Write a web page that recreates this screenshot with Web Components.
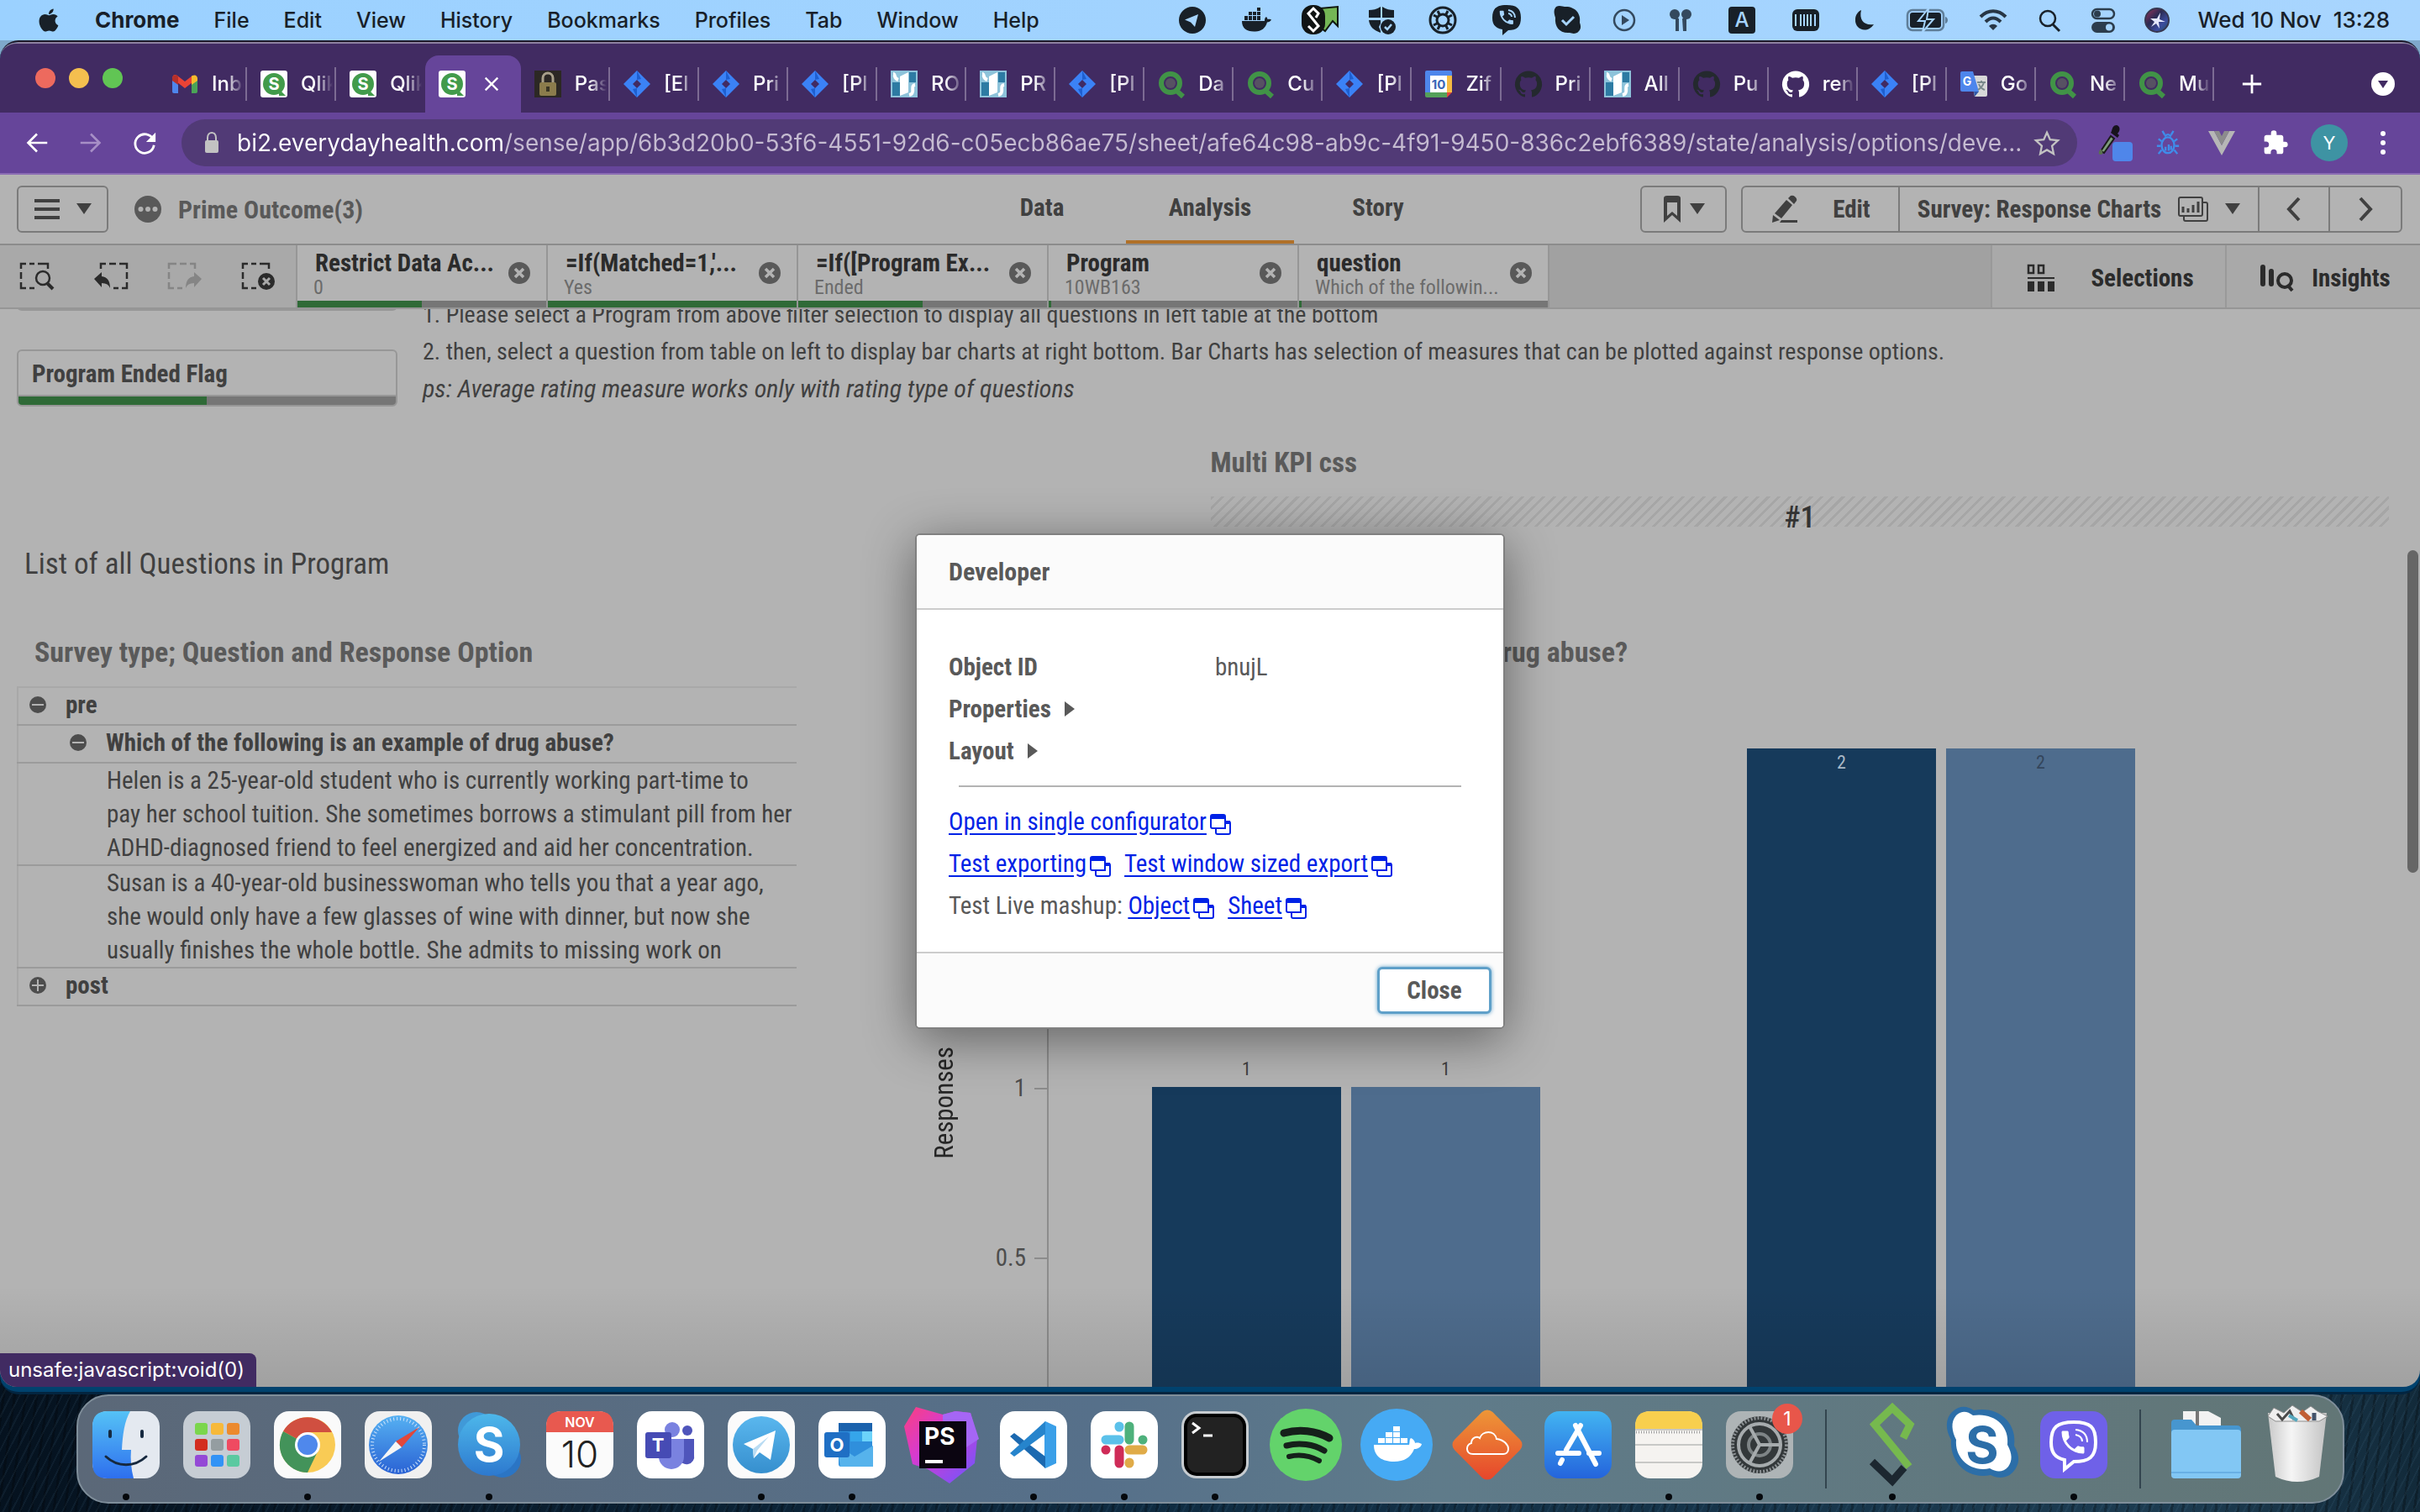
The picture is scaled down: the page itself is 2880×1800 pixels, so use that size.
<!DOCTYPE html>
<html lang="en">
<head>
<meta charset="utf-8">
<title>Survey: Response Charts</title>
<style>
    html, body {
        margin: 0;
        height: 100%;
        overflow: hidden;
    }

    body {
        font-family: "Roboto Condensed", Roboto, "Liberation Sans", sans-serif;
        font-size: 29px;
        color: #404040;
    }
</style>
</head>
<body>
<mac-desktop>
    <menu-bar slot="top"></menu-bar>
    <browser-window>
        <tab-strip slot="chrome"></tab-strip>
        <address-bar slot="chrome"></address-bar>
        <sheet-header></sheet-header>
        <selection-bar></selection-bar>
        <sheet-page></sheet-page>
        <developer-dialog slot="overlay"></developer-dialog>
        <span slot="status">unsafe:javascript:void(0)</span>
    </browser-window>
    <dock-bar slot="bottom"></dock-bar>
</mac-desktop>

<script>
const UI_FONT = `Inter, "Liberation Sans", sans-serif`;

const PHONE = "M6.62 10.79a15.1 15.1 0 0 0 6.59 6.59l2.2-2.2a1 1 0 0 1 1.02-.24c1.12.37 2.33.57 3.57.57.55 0 1 .45 1 1V20c0 .55-.45 1-1 1A17 17 0 0 1 3 4c0-.55.45-1 1-1h3.5c.55 0 1 .45 1 1 0 1.25.2 2.45.57 3.57.11.35.03.74-.25 1.02l-2.2 2.2z";
const CAT = "M12 .3a12 12 0 0 0-3.8 23.4c.6.1.8-.3.8-.6v-2c-3.3.7-4-1.6-4-1.6-.6-1.4-1.4-1.8-1.4-1.8-1-.7.1-.7.1-.7 1.2 0 1.9 1.2 1.9 1.2 1 1.8 2.8 1.3 3.5 1 0-.8.4-1.3.7-1.6-2.7-.3-5.5-1.3-5.5-6 0-1.2.5-2.3 1.3-3.1-.2-.4-.6-1.6 0-3.2 0 0 1-.3 3.4 1.2a11.5 11.5 0 0 1 6 0c2.3-1.5 3.3-1.2 3.3-1.2.6 1.6.2 2.8 0 3.2.9.8 1.3 1.9 1.3 3.2 0 4.6-2.8 5.6-5.5 5.9.5.4.9 1 .9 2.2v3.3c0 .3.1.7.8.6A12 12 0 0 0 12 .3";

/* name: [width, height, markup] */
const ICONS = {
    /* menu bar */
    apple: [24, 24, `<path fill="currentColor" d="M17.05 20.28c-.98.95-2.05.8-3.08.35-1.09-.46-2.09-.48-3.24 0-1.44.62-2.2.44-3.06-.35C2.79 15.25 3.51 7.59 9.05 7.31c1.35.07 2.29.74 3.08.8 1.18-.24 2.31-.93 3.57-.84 1.51.12 2.65.72 3.4 1.8-3.12 1.87-2.38 5.98.48 7.13-.57 1.5-1.31 2.99-2.54 4.09zM12.03 7.25c-.15-2.23 1.66-4.07 3.74-4.25.29 2.58-2.34 4.5-3.74 4.25z"/>`],
    "m-telegram": [36, 36, `<circle cx="18" cy="18" r="16" fill="currentColor"/><path fill="#a6d4fd" d="M9 17.5 25 11l-4 15-5-5.5z"/>`],
    "m-docker": [36, 36, `<path fill="currentColor" d="M1 19h27c0-2 0-4 2-5 1 1 1.5 2 1.5 3 2-.5 4 0 4.5.5-1 2-3 3-5 3-2 7-7 11-14 11C7 32 1 28 1 19zM4 13h4v5H4zM9 13h4v5H9zM14 13h4v5h-4zM19 13h4v5h-4zM9 8h4v4H9zM14 8h4v4h-4zM19 8h4v4h-4zM19 3h4v4h-4z"/>`],
    "m-shop": [44, 36, `<path fill="#74b655" stroke="#10180f" stroke-width="2" d="M22 4 43 2v23l-6-6-9 12-8-6z"/><rect width="28" height="35" rx="13" fill="#101413"/><path fill="none" stroke="#fff" stroke-width="3" d="M17 15l3-5-6-6-6 6 12 15-6 6-6-6"/>`],
    "m-shield": [36, 36, `<path fill="currentColor" d="M3 6c5 0 9-1 14-4v13H3zM19 2c5 3 9 4 14 4v9H19zM3 18h14v4l-2 4 2 5v2C9 30 4 26 3 18z"/><circle cx="26" cy="26" r="9" fill="currentColor"/><path d="m22 26 3 3 5-6" fill="none" stroke="#a6d4fd" stroke-width="2.5"/>`],
    "m-buoy": [36, 36, `<g fill="none" stroke="currentColor" stroke-width="3"><circle cx="18" cy="18" r="15"/><circle cx="18" cy="18" r="7"/><path d="m7 12 6 3M12 7l3 6M29 12l-6 3M24 7l-3 6M7 24l6-3M12 29l3-6M29 24l-6-3M24 29l-3-6"/></g>`],
    "m-viber": [36, 38, `<path fill="currentColor" d="M18 1C30 1 35 5 35 16S30 31 20 31l-7 6v-7C4 28 1 24 1 16 1 5 6 1 18 1z"/><path fill="#a6d4fd" transform="translate(7 5) scale(.9)" d="${PHONE}"/><path d="M20 7c5 1 8 4 8 9M20 11c2 0 4 2 4 4" fill="none" stroke="#a6d4fd" stroke-width="2"/>`],
    "m-skype": [36, 36, `<path fill="currentColor" d="M4 2c4-2 8 0 10 0 11-1 20 7 18 19 2 5 1 8-1 10-3 4-8 3-11 2C8 34 2 26 3 15 1 9 1 5 4 2z"/><path d="m11 18 5 5 9-9" fill="none" stroke="#a6d4fd" stroke-width="3"/>`],
    "m-play": [28, 28, `<circle cx="14" cy="14" r="12" fill="none" stroke="#34495e" stroke-width="2.5"/><path d="m11 8 9 6-9 6z" fill="#34495e"/>`],
    "m-pods": [28, 28, `<g fill="#34495e"><circle cx="7" cy="7" r="6"/><circle cx="21" cy="7" r="6"/><path d="M7 12h5v15H8V13zM16 12h5v15h-4z"/></g>`],
    "m-a": [34, 34, `<rect x="1" y="1" width="32" height="32" rx="4" fill="currentColor"/><text x="17" y="25" font-size="24" text-anchor="middle" fill="#a6d4fd">A</text>`],
    "m-bars": [34, 30, `<rect x="1" y="2" width="32" height="26" rx="6" fill="currentColor"/><path d="M5 8v14M11 8v14M15 8v14M19 8v14M23 8v14M28 8v14" stroke="#a6d4fd" stroke-width="2"/>`],
    "m-moon": [28, 28, `<path fill="currentColor" d="M10 2c-3 12 4 19 15 17C17 31 2 25 3 13 3 8 6 4 10 2z"/>`],
    "m-battery": [52, 28, `<rect x="2" y="2" width="43" height="24" rx="6" fill="none" stroke="#5f7e99" stroke-width="2.5"/><rect x="5" y="5" width="37" height="18" rx="3" fill="currentColor"/><path d="M47 10c4 1 4 7 0 8z" fill="#5f7e99"/><path d="M27 0 15 15h8l-3 13 13-15h-8z" fill="currentColor" stroke="#a6d4fd" stroke-width="2"/>`],
    "m-wifi": [36, 28, `<g fill="none" stroke="#273645" stroke-width="4"><path d="M3 10c9-9 21-9 30 0M9 16c6-6 12-6 18 0"/></g><path d="m18 26-5-5c3-3 7-3 10 0z" fill="#273645"/>`],
    "m-search": [28, 28, `<circle cx="12" cy="12" r="9" fill="none" stroke="currentColor" stroke-width="2.5"/><path d="m18 19 8 8" stroke="currentColor" stroke-width="3"/>`],
    "m-control": [30, 30, `<rect x="2" y="2" width="26" height="11" rx="5.5" fill="none" stroke="#2c3d4d" stroke-width="2.5"/><circle cx="8" cy="7.5" r="4" fill="#2c3d4d"/><rect x="1" y="17" width="28" height="13" rx="6.5" fill="#2c3d4d"/><circle cx="22" cy="23.5" r="4" fill="#a6d4fd"/>`],
    "m-siri": [30, 30, `<defs><linearGradient id="g" x2="1" y2="1"><stop stop-color="#a3325c"/><stop offset=".4" stop-color="#2b2a52"/><stop offset=".7" stop-color="#3c4c9f"/><stop offset="1" stop-color="#1f5260"/></linearGradient></defs><circle cx="15" cy="15" r="14" fill="url(#g)" stroke="#37364f" stroke-width="2"/><path d="m7 13 8 0 4-7-1 8 7 3-8 0 1 8-4-6-6 4 4-6z" fill="#e5e8ff"/>`],

    /* tab favicons */
    gmail: [32, 32, `<path fill="#4e86ec" d="M1 9v16q0 2 2 2h5V13z"/><path fill="#4aa457" d="M31 9v16q0 2-2 2h-5V13z"/><path fill="#ea4335" d="M1 9q1-6 6-3l9 7 9-7v8l-9 7-9-7z"/><path fill="#f6bb2d" d="M24 6.5q6-3 7 2.5v3l-7 5z"/><path fill="#b6302a" d="M1 9q1-6 7-2.5V17l-7-5z"/>`],
    qs: [32, 32, `<rect width="32" height="32" rx="3" fill="#fff"/><circle cx="16" cy="16" r="13" fill="#429b4b"/><path d="m22 22 8 8h-8z" fill="#429b4b"/><text x="16" y="23" font-size="20" font-weight="700" text-anchor="middle" fill="#fff">S</text>`],
    lock: [32, 32, `<rect width="32" height="32" fill="#2c2824"/><path d="M10 15V9c0-8 12-8 12 0v6" fill="none" stroke="#a9a08a" stroke-width="3"/><rect x="6" y="14" width="20" height="16" rx="2" fill="#8b7c4c"/><path d="M16 19v6" stroke="#3a3524" stroke-width="4"/>`],
    jira: [32, 32, `<path fill="#3b82f6" d="m16 0 16 16-16 16L0 16z"/><path fill="#1e5fd0" d="m16 0 5 10-5 1zM16 32l-5-10 5-1z"/><path fill="#412b62" d="m16 11 5 5-5 5-5-5z"/>`],
    sheetjs: [32, 32, `<rect width="32" height="32" fill="#8dc3da"/><path d="M2 14h9v16H2zM22 2h8v12h-8z" fill="#2d7ba3"/><path d="M11 7 21 2v24l-10 4z" fill="#fff"/><path d="M3 4c3 0 0 5 6 7M29 17c-7 1 2 10-7 12" fill="none" stroke="#fff" stroke-width="4"/>`],
    qlik: [32, 32, `<circle cx="15" cy="15" r="11" fill="none" stroke="#419347" stroke-width="6"/><circle cx="15" cy="15" r="6" fill="#575163"/><path d="m20 22 10 9" stroke="#419347" stroke-width="6"/>`],
    gcal: [32, 32, `<path d="M0 2q0-2 2-2h28q2 0 2 2v6H0z" fill="#4e86ec"/><path d="M0 6h6v20H0z" fill="#4e86ec"/><path d="M26 6h6v20h-6z" fill="#f6bb42"/><path d="M0 26h26v6H2q-2 0-2-2z" fill="#55a15a"/><path d="M26 26h6l-6 6z" fill="#e2483c"/><rect x="6" y="6" width="20" height="20" fill="#fff"/><text x="16" y="22" font-size="15" font-weight="700" text-anchor="middle" fill="#3a66b8">10</text>`],
    github: [24, 24, `<path fill="currentColor" d="${CAT}"/>`],
    gtrans: [32, 32, `<path d="M12 6h18q2 0 2 2v21q0 2-2 2H17z" fill="#d8d8d8"/><path d="M2 1h13l7 24H2q-2 0-2-2V3q0-2 2-2z" fill="#4e86ec"/><path d="m16 25 6 0-5 6z" fill="#3158a8"/><text x="8" y="18" font-size="14" font-weight="700" text-anchor="middle" fill="#fff">G</text><path d="M20 14h10M25 12v2M28 14c-1 4-4 7-7 9M22 16c1 3 4 6 7 7" fill="none" stroke="#7b8a8c" stroke-width="2"/>`],
    close: [24, 24, `<path d="m4 4 16 16M20 4 4 20" stroke="currentColor" stroke-width="2.5"/>`],
    plus: [28, 28, `<path d="M14 2v24M2 14h24" stroke="currentColor" stroke-width="3"/>`],
    "tab-menu": [28, 28, `<circle cx="14" cy="14" r="14" fill="#fff"/><path d="M8 10h12l-6 9z" fill="#412b62"/>`],

    /* address bar */
    back: [32, 32, `<path d="M30 16H4M16 4 4 16l12 12" fill="none" stroke="currentColor" stroke-width="3"/>`],
    forward: [32, 32, `<path d="M2 16h26M16 4l12 12-12 12" fill="none" stroke="currentColor" stroke-width="3"/>`],
    reload: [32, 32, `<path d="M27 12a12 12 0 1 0 1 7" fill="none" stroke="currentColor" stroke-width="3"/><path d="M30 3v12H18z" fill="currentColor"/>`],
    padlock: [20, 28, `<path d="M5 12V8c0-8 10-8 10 0v4" fill="none" stroke="currentColor" stroke-width="2"/><rect x="2" y="11" width="16" height="15" rx="2" fill="currentColor"/>`],
    star: [32, 32, `<path d="m16 3 4 9 10 1-7.5 7 2 10-8.5-5-8.5 5 2-10L2 13l10-1z" fill="none" stroke="currentColor" stroke-width="2.5"/>`],
    picker: [44, 44, `<path d="M6 32 18 14l4 3L10 34z" fill="#7d9c7a" stroke="#1b1b1b" stroke-width="2"/><path d="m18 10 8 6 2-3-2-2c4-4 3-9-1-10-4 0-5 3-6 7z" fill="#17131c"/><path d="M5 30q-3 6 1 6t1-6z" fill="#59714e"/><rect x="20" y="21" width="24" height="23" rx="4" fill="#4f86ea"/>`],
    bug: [32, 32, `<g fill="none" stroke="#3f8dea" stroke-width="2.5"><ellipse cx="16" cy="19" rx="8" ry="10"/><path d="M12 8q4-5 8 0M12 6 9 1M20 6l3-5M8 14l-4-3M7 20H2M8 25l-4 5M24 14l4-3M25 20h5M24 25l4 5M13 26v-5M17 26v-8M20 25v-5"/></g>`],
    vue: [32, 32, `<path d="M0 2h7l9 17 9-17h7L16 31z" fill="#b6b6b6"/><path d="M7 2h6l3 6 3-6h6l-9 17z" fill="#8c8c8c"/>`],
    puzzle: [24, 24, `<path fill="currentColor" d="M20.5 11H19V7c0-1.1-.9-2-2-2h-4V3.5a2.5 2.5 0 0 0-5 0V5H4c-1.1 0-2 .9-2 2v3.8h1.5a2.7 2.7 0 0 1 0 5.4H2V20c0 1.1.9 2 2 2h3.8v-1.5a2.7 2.7 0 0 1 5.4 0V22H17c1.1 0 2-.9 2-2v-4h1.5a2.5 2.5 0 0 0 0-5z"/>`],
    dots: [8, 30, `<g fill="currentColor"><circle cx="4" cy="4" r="3"/><circle cx="4" cy="15" r="3"/><circle cx="4" cy="26" r="3"/></g>`],

    /* sheet */
    burger: [30, 26, `<path d="M0 3h30M0 13h30M0 23h30" stroke="currentColor" stroke-width="4"/>`],
    caret: [18, 14, `<path d="M0 0h18L9 13z" fill="currentColor"/>`],
    arrow: [14, 18, `<path d="M0 0v18l12-9z" fill="currentColor"/>`],
    "app-dots": [32, 32, `<circle cx="16" cy="16" r="16" fill="currentColor"/><g fill="#b3b3b3"><circle cx="7.5" cy="16" r="3"/><circle cx="16" cy="16" r="3"/><circle cx="24.5" cy="16" r="3"/></g>`],
    bookmark: [22, 34, `<path d="M1 4q0-3 4-3h12q4 0 4 3v29l-10-9-10 9z" fill="currentColor"/><path d="M5 9h12v16l-6-5-6 5z" fill="#b3b3b3"/>`],
    pencil: [34, 34, `<path d="M5 22 19 6l7 6-13 16zM21 4l3-3q3-1 5 1 3 2 2 5l-3 4zM3 24l8 6-9 3zM13 30h19v3H11z" fill="currentColor"/>`],
    sheet: [36, 30, `<g fill="none" stroke="currentColor" stroke-width="2"><rect x="1" y="1" width="28" height="22" rx="2"/><path d="M30 7h3q2 0 2 2v18q0 2-2 2H9q-2 0-2-2v-3"/></g><path d="M6 12v7M12 14v5M18 10v9M24 6v13" stroke="currentColor" stroke-width="3"/>`],
    prev: [22, 30, `<path d="M17 2 5 15l12 13" fill="none" stroke="currentColor" stroke-width="4"/>`],
    next: [22, 30, `<path d="m5 2 12 13L5 28" fill="none" stroke="currentColor" stroke-width="4"/>`],
    "sel-search": [40, 34, `<path d="M1 8V2h6M11 2h6M21 2h12v6M1 12v8M1 24v7h6M11 31h6" fill="none" stroke="currentColor" stroke-width="2.5"/><circle cx="27" cy="19" r="8" fill="none" stroke="currentColor" stroke-width="2.5"/><path d="m32 25 7 7" stroke="currentColor" stroke-width="4"/>`],
    "sel-back": [40, 34, `<path d="M8 8V2h6M18 2h8M30 2h9v6M39 12v8M39 24v7h-6M29 31h-6" fill="none" stroke="currentColor" stroke-width="2.5"/><path d="m0 20 9-8v5q10 1 10 14-2-6-10-6v5z" fill="currentColor"/>`],
    "sel-forward": [40, 34, `<path d="M32 8V2h-6M22 2h-8M10 2H1v6M1 12v8M1 24v7h6M11 31h6" fill="none" stroke="currentColor" stroke-width="2.5"/><path d="m40 20-9-8v5q-10 1-10 14 2-6 10-6v5z" fill="currentColor"/>`],
    "sel-clear": [40, 34, `<path d="M1 8V2h6M11 2h6M21 2h11v6M1 12v8M1 24v7h6M11 31h6" fill="none" stroke="currentColor" stroke-width="2.5"/><circle cx="29" cy="23" r="10" fill="currentColor"/><path d="m25 19 8 8M33 19l-8 8" stroke="#a9a9a9" stroke-width="3"/>`],
    clear: [26, 26, `<circle cx="13" cy="13" r="13" fill="currentColor"/><path d="m8 8 10 10M18 8 8 18" stroke="#b3b3b3" stroke-width="3.5"/>`],
    selections: [34, 34, `<path d="M2 2h6v9H2zM14 2h6v9h-6z" fill="none" stroke="currentColor" stroke-width="2.5"/><path d="M1 16h32v2H1zM1 21h8v12H1zM13 21h8v12h-8zM25 21h8v12h-8z" fill="currentColor"/>`],
    insights: [42, 34, `<path d="M4 4v20M14 9v15" stroke="currentColor" stroke-width="6" stroke-linecap="round"/><circle cx="30" cy="20" r="8" fill="none" stroke="currentColor" stroke-width="4"/><path d="m33 25 6 7" stroke="currentColor" stroke-width="4"/>`],
    minus: [20, 20, `<circle cx="10" cy="10" r="10" fill="currentColor"/><path d="M3 10h14" stroke="#b3b3b3" stroke-width="2"/>`],
    expand: [20, 20, `<circle cx="10" cy="10" r="10" fill="currentColor"/><path d="M3 10h14M10 3v14" stroke="#b3b3b3" stroke-width="2"/>`],
    popout: [25, 25, `<g fill="none" stroke="currentColor" stroke-width="2"><path d="M1 3q0-2 2-2h13q2 0 2 2v14H3q-2 0-2-2zM7 18v4q0 2 2 2h13q2 0 2-2V11q0-2-2-2h-3"/></g><path d="M1 2h17v4H1zM18 8h6v4h-6z" fill="currentColor"/>`],

    /* dock */
    finder: [96, 96, `<defs><linearGradient id="g" x2="0" y2="1"><stop stop-color="#55c2f6"/><stop offset="1" stop-color="#2e6fee"/></linearGradient></defs><rect x="8" y="8" width="80" height="80" rx="18" fill="#e4e9f0"/><path d="M26 8h27c-7 12-9 28-10 46h11c-1 11 0 23 3 34H26Q8 88 8 70V26Q8 8 26 8z" fill="url(#g)"/><path d="M29 32v6M67 32v6" stroke="#16293f" stroke-width="4" stroke-linecap="round"/><path d="M24 62c14 13 34 13 48 0" fill="none" stroke="#16293f" stroke-width="3" stroke-linecap="round"/>`],
    launchpad: [96, 96, `<rect x="8" y="8" width="80" height="80" rx="18" fill="#c6cdd4"/><g><rect x="22" y="22" width="15" height="14" rx="3" fill="#7bd64d"/><rect x="41" y="22" width="15" height="14" rx="3" fill="#f7b93a"/><rect x="60" y="22" width="15" height="14" rx="3" fill="#ec8a2e"/><rect x="22" y="41" width="15" height="14" rx="3" fill="#d32d20"/><rect x="41" y="41" width="15" height="14" rx="3" fill="#949da1"/><rect x="60" y="41" width="15" height="14" rx="3" fill="#ef4a61"/><rect x="22" y="60" width="15" height="14" rx="3" fill="#9449d6"/><rect x="41" y="60" width="15" height="14" rx="3" fill="#3193f6"/><rect x="60" y="60" width="15" height="14" rx="3" fill="#5ac9a0"/></g>`],
    chrome: [96, 96, `<rect x="8" y="8" width="80" height="80" rx="18" fill="#fafafa"/><circle cx="48" cy="48" r="33" fill="#f9cb55"/><path d="M48 48 19 32A33 33 0 0 1 77 33H48z" fill="#d04f40"/><path d="m48 81 12-25-12-8-29-16a33 33 0 0 0 29 49z" fill="#43935a"/><circle cx="48" cy="48" r="15" fill="#fff"/><circle cx="48" cy="48" r="12" fill="#4f88ec"/>`],
    safari: [96, 96, `<defs><linearGradient id="g" x2="0" y2="1"><stop stop-color="#56b1f2"/><stop offset="1" stop-color="#2a62d4"/></linearGradient></defs><rect x="8" y="8" width="80" height="80" rx="18" fill="#f0f0f0"/><circle cx="48" cy="48" r="35" fill="url(#g)"/><circle cx="48" cy="48" r="31" fill="none" stroke="#cfe3fa" stroke-width="4" stroke-dasharray="1 3"/><path d="m73 27-21 24-7-7z" fill="#e2473b"/><path d="m25 68 20-24 7 7z" fill="#f6f6f6"/>`],
    skype: [96, 96, `<defs><linearGradient id="g" x2="0" y2="1"><stop stop-color="#4db7ea"/><stop offset="1" stop-color="#2d79cf"/></linearGradient></defs><circle cx="33" cy="31" r="22" fill="#4099d8"/><circle cx="64" cy="65" r="22" fill="#2b75c4"/><circle cx="48" cy="48" r="37" fill="url(#g)"/><text x="48" y="68" font-size="56" font-weight="700" text-anchor="middle" fill="#fff">S</text>`],
    calendar: [96, 96, `<rect x="8" y="8" width="80" height="80" rx="18" fill="#fbfbfb"/><path d="M26 8h44q18 0 18 18v7H8v-7Q8 8 26 8z" fill="#e8594f"/><text x="48" y="27" font-size="16" font-weight="600" text-anchor="middle" fill="#fff">NOV</text><text x="48" y="75" font-size="44" font-weight="300" text-anchor="middle" fill="#222">10</text>`],
    teams: [96, 96, `<rect x="8" y="8" width="80" height="80" rx="18" fill="#fff"/><circle cx="68" cy="31" r="6" fill="#4f55bb"/><path d="M58 41h18v19a9 9 0 0 1-18 4z" fill="#4f55bb"/><circle cx="50" cy="30" r="9" fill="#7a82e0"/><path d="M34 41h30v21a15 15 0 0 1-30 0z" fill="#7a82e0"/><rect x="18" y="33" width="31" height="31" rx="3" fill="#464bb4"/><text x="33" y="56" font-size="22" font-weight="700" text-anchor="middle" fill="#fff">T</text>`],
    telegram: [96, 96, `<defs><linearGradient id="g" x2="0" y2="1"><stop stop-color="#5ab7ee"/><stop offset="1" stop-color="#368fce"/></linearGradient></defs><rect x="8" y="8" width="80" height="80" rx="18" fill="#fbfbfb"/><circle cx="48" cy="48" r="34" fill="url(#g)"/><path d="M27 47 65 31l-6 35-13-9-7 7-1-11z" fill="#fff"/><path d="m38 53 19-15-14 17-4 9z" fill="#b9dcf3"/>`],
    outlook: [96, 96, `<rect x="8" y="8" width="80" height="80" rx="18" fill="#fff"/><rect x="32" y="22" width="40" height="52" rx="3" fill="#2f8fdc"/><path d="M32 22h40v10H32z" fill="#1b62ad"/><path d="M46 32h14v12H46z" fill="#35a5ea"/><path d="M60 32h12v12H60z" fill="#6cd3fa"/><path d="m30 48 21 14 22-13v25H34z" fill="#56b3ec"/><rect x="15" y="33" width="30" height="30" rx="3" fill="#1f6fc4"/><text x="30" y="56" font-size="22" font-weight="700" text-anchor="middle" fill="#fff">O</text>`],
    phpstorm: [96, 96, `<defs><linearGradient id="g" x2="1" y2="1"><stop stop-color="#fb3f7f"/><stop offset=".4" stop-color="#d63bd1"/><stop offset="1" stop-color="#6a57ff"/></linearGradient></defs><path d="m16 3 32 9 15-4 18 2 8 30-3 30-30 24-26-17-18-6L2 26z" fill="url(#g)"/><path d="m48 12 15-4 18 2 10 31-15 10V20H48z" fill="#a566f5"/><rect x="20" y="20" width="56" height="56" fill="#0b0511"/><text x="26" y="48" font-size="28" font-weight="700" fill="#fff">PS</text><path d="M27 66h21v4H27z" fill="#fff"/>`],
    vscode: [96, 96, `<rect x="8" y="8" width="80" height="80" rx="18" fill="#fff"/><path d="m62 20 13 6v44l-13 6-1-2V22z" fill="#3a9fe8"/><path d="m20 38 5-4 37 28v14z" fill="#1b69b0"/><path d="m20 58 5 4 37-27V20z" fill="#2684cc"/>`],
    slack: [96, 96, `<rect x="8" y="8" width="80" height="80" rx="18" fill="#fff"/><g stroke-width="11" stroke-linecap="round"><path d="M26 42h16M42 26v1" stroke="#5bc1ea"/><path d="M54 26v16M70 42v0" stroke="#4eb17c"/><path d="M70 54H54M54 70v-1" stroke="#e0ab48"/><path d="M42 70V54M26 54v0" stroke="#cf2c58"/></g>`],
    terminal: [96, 96, `<rect x="8" y="8" width="80" height="80" rx="18" fill="#c7ccd0"/><rect x="11" y="11" width="74" height="74" rx="15" fill="#000"/><rect x="15" y="15" width="66" height="66" rx="11" fill="#222"/><path d="m21 22 8 6-8 6M34 37h11" fill="none" stroke="#fff" stroke-width="3"/>`],
    spotify: [96, 96, `<circle cx="48" cy="48" r="43" fill="#63d36b"/><g fill="none" stroke="#15201a" stroke-linecap="round"><path d="M22 34c18-5 38-3 54 6" stroke-width="9"/><path d="M25 49c15-4 32-2 45 6" stroke-width="7"/><path d="M28 62c12-3 25-1 36 5" stroke-width="6"/></g>`],
    docker: [96, 96, `<circle cx="48" cy="48" r="43" fill="#46aaf4"/><path fill="#fff" d="M21 48h42c1-3 0-6 2-8 3 1 5 4 5 6 3-1 6 0 8 1-1 4-5 6-9 6-4 10-12 15-24 15-14 0-24-6-24-20zM26 40h8v6h-8zM35 40h8v6h-8zM44 40h8v6h-8zM53 40h8v6h-8zM35 33h8v6h-8zM44 33h8v6h-8zM44 26h8v6h-8z"/>`],
    cloudapp: [96, 96, `<defs><linearGradient id="g" x2="1" y2="1"><stop stop-color="#ee9a38"/><stop offset="1" stop-color="#e6432b"/></linearGradient></defs><rect x="16" y="16" width="64" height="64" rx="9" transform="rotate(45 48 48)" fill="url(#g)"/><path d="M31 59c-9 0-9-11-2-13 0-6 6-9 10-6 3-9 18-10 20 1 9 1 14 7 14 12 0 4-3 6-6 6z" fill="none" stroke="#fff" stroke-width="2"/>`],
    appstore: [96, 96, `<defs><linearGradient id="g" x2="0" y2="1"><stop stop-color="#42b4f2"/><stop offset="1" stop-color="#2464dc"/></linearGradient></defs><rect x="8" y="8" width="80" height="80" rx="18" fill="url(#g)"/><g stroke="#fff" stroke-width="6" stroke-linecap="round"><path d="M51 25 34 54M45 25l24 46M24 58h25M61 58h12M29 66l-2 4"/></g>`],
    notes: [96, 96, `<rect x="8" y="8" width="80" height="80" rx="18" fill="#f5f3f0"/><path d="M26 8h44q18 0 18 18v3H8v-3Q8 8 26 8z" fill="#f8cf4e"/><path d="M8 30h80M8 48h80M8 69h80" stroke="#c8c8c6" stroke-width="2"/><path d="M9 33h78" stroke="#a0a0a0" stroke-width="3" stroke-dasharray="1 2"/>`],
    settings: [96, 96, `<rect x="8" y="8" width="80" height="80" rx="18" fill="#aeb4b6"/><circle cx="48" cy="48" r="34" fill="#33383a"/><circle cx="48" cy="48" r="32" fill="none" stroke="#8c9194" stroke-width="4" stroke-dasharray="2 2"/><circle cx="48" cy="48" r="25" fill="none" stroke="#a6abad" stroke-width="4"/><circle cx="48" cy="48" r="13" fill="none" stroke="#7e8486" stroke-width="4"/><path d="M48 48h25M48 48 36 26M48 48 36 70" stroke="#a6abad" stroke-width="4"/><circle cx="81" cy="17" r="18" fill="#e8564a"/><text x="81" y="25" font-size="23" text-anchor="middle" fill="#fff">1</text>`],
    shopware: [96, 96, `<path d="M61 40 69 24 48 4 27 24l41 50" fill="none" stroke="#76b94e" stroke-width="9"/><path d="m24 68 24 23 14-16" fill="none" stroke="#1c2730" stroke-width="9"/>`],
    skypebiz: [96, 96, `<path d="M11 9c9-9 19-7 26-2 28-6 52 14 48 42 8 13 6 23-1 31-8 9-19 8-27 4C29 90 8 68 10 42 3 30 3 17 11 9z" fill="#2c6ea8"/><path d="M16 13c7-6 13-5 20 0 24-4 44 12 41 35 6 11 6 19 1 26-6 7-14 7-22 2-23 5-42-12-40-34-5-10-7-21 0-29z" fill="#fff"/><text x="47" y="70" font-size="60" font-weight="700" text-anchor="middle" fill="#2c6ea8">S</text>`],
    viber: [96, 96, `<rect x="8" y="8" width="80" height="80" rx="18" fill="#6f61e8"/><path d="M48 21c20 0 26 6 26 24S66 68 48 68l-11 9V66C25 63 21 57 21 45c0-18 7-24 27-24z" fill="none" stroke="#fff" stroke-width="4"/><path fill="#fff" transform="translate(29 27) scale(1.5)" d="${PHONE}"/><path d="M50 30c9 1 14 6 14 15M50 36c5 1 8 4 8 8" fill="none" stroke="#fff" stroke-width="2"/>`],
    folder: [96, 96, `<path d="M20 8h30l15 8v20H20z" fill="#f2f2f2"/><path d="M35 8h4v20h-4z" fill="#777"/><path d="M6 22q0-4 4-4h20l6 7h48q5 0 5 5v10H6z" fill="#4796cf"/><rect x="6" y="30" width="83" height="58" rx="4" fill="#82c7f4"/><path d="M6 80h83v2H6z" fill="#68b0e4"/>`],
    trash: [96, 96, `<defs><linearGradient id="g" x2="1"><stop stop-color="#c9c9c9"/><stop offset=".4" stop-color="#f5f5f5"/><stop offset="1" stop-color="#c3c3c3"/></linearGradient></defs><path d="M13 10h70l-9 76q-26 12-52 0z" fill="url(#g)"/><path d="M13 14 20 4l12 6L42 1l12 8 10-7 8 6 12 6-10 6H22z" fill="#efefef" stroke="#8d8d8d"/><path d="m24 11 6 7 9-10 5 10" fill="none" stroke="#4b4b4b" stroke-width="3"/><path d="m52 8 11 10" stroke="#c05e35" stroke-width="6"/><path d="m38 13 10 6" stroke="#54a7bd" stroke-width="4"/><path d="M68 10v9" stroke="#44546b" stroke-width="5"/>`],
};

function define(name, html) {
    const template = document.createElement("template");
    template.innerHTML = html;
    customElements.define(name, class extends HTMLElement {
        constructor() {
            super();
            this.attachShadow({ mode: "open" }).appendChild(template.content.cloneNode(true));
        }
    });
}

class UiIcon extends HTMLElement {
    connectedCallback() {
        const [w, h, markup] = ICONS[this.getAttribute("name")];
        const width = this.getAttribute("width") || w;
        const root = this.shadowRoot || this.attachShadow({ mode: "open" });
        root.innerHTML = `
            <style>
                :host { display: inline-flex; flex: none; }
                svg { display: block; overflow: visible; font-family: ${UI_FONT}; }
            </style>
            <svg width="${width}" height="${Math.round(width * h / w)}" viewBox="0 0 ${w} ${h}" aria-hidden="true">${markup}</svg>`;
    }
}
customElements.define("ui-icon", UiIcon);

/* desktop */

define("mac-desktop", `
    <style>
        :host {
            display: flex;
            flex-direction: column;
            height: 100vh;
            background:
                repeating-linear-gradient(117deg, rgba(110,160,195,.08) 0 2px, transparent 2px 9px),
                repeating-linear-gradient(98deg, rgba(0,0,0,.25) 0 3px, transparent 3px 13px),
                linear-gradient(90deg, #05121f, #0f2c42 50%, #1c3b50 90%, #122a3a);
        }
        .main { flex: 1; min-height: 0; display: flex; background: linear-gradient(#7fa8cb 40px, transparent 40px); }
        ::slotted(browser-window) { flex: 1; }
    </style>
    <slot name="top"></slot>
    <div class="main"><slot></slot></div>
    <slot name="bottom"></slot>
`);

define("menu-bar", `
    <style>
        :host {
            display: flex;
            align-items: center;
            justify-content: space-between;
            height: 48px;
            padding: 0 36px 0 40px;
            background: linear-gradient(90deg, #9bd1ff, #a8d5fe);
            color: #182028;
            font: 500 25px/48px ${UI_FONT};
        }
        nav, .tray { display: flex; align-items: center; }
        nav { gap: 41px; }
        nav ui-icon { margin-right: -4px; }
        a { color: inherit; text-decoration: none; }
        b { font-size: 26px; font-weight: 700; }
        .tray span { display: flex; justify-content: center; width: 76px; }
        .tray .s { width: 64px; }
        .tray .m { width: 70px; }
        .tray .l { width: 86px; }
        time { margin-left: 16px; font-size: 26px; white-space: nowrap; }
    </style>
    <nav>
        <ui-icon name="apple" width="36"></ui-icon>
        <a href="#"><b>Chrome</b></a><a href="#">File</a><a href="#">Edit</a><a href="#">View</a><a href="#">History</a>
        <a href="#">Bookmarks</a><a href="#">Profiles</a><a href="#">Tab</a><a href="#">Window</a><a href="#">Help</a>
    </nav>
    <div class="tray">
        <span><ui-icon name="m-telegram"></ui-icon></span>
        <span><ui-icon name="m-docker"></ui-icon></span>
        <span><ui-icon name="m-shop"></ui-icon></span>
        <span class="m"><ui-icon name="m-shield"></ui-icon></span>
        <span><ui-icon name="m-buoy"></ui-icon></span>
        <span><ui-icon name="m-viber"></ui-icon></span>
        <span class="m"><ui-icon name="m-skype"></ui-icon></span>
        <span class="s"><ui-icon name="m-play"></ui-icon></span>
        <span class="m"><ui-icon name="m-pods"></ui-icon></span>
        <span><ui-icon name="m-a"></ui-icon></span>
        <span><ui-icon name="m-bars"></ui-icon></span>
        <span class="s"><ui-icon name="m-moon"></ui-icon></span>
        <span class="l"><ui-icon name="m-battery"></ui-icon></span>
        <span class="m"><ui-icon name="m-wifi"></ui-icon></span>
        <span class="s"><ui-icon name="m-search"></ui-icon></span>
        <span class="s"><ui-icon name="m-control"></ui-icon></span>
        <span class="s"><ui-icon name="m-siri"></ui-icon></span>
        <time>Wed 10 Nov&nbsp; 13:28</time>
    </div>
`);

/* browser */

define("browser-window", `
    <style>
        :host {
            display: flex;
            flex-direction: column;
            min-width: 0;
            border-top: 2px solid #1d1828;
            border-bottom: 3px solid #032540;
            border-radius: 22px;
            background: #00426e;
            overflow: hidden;
        }
        .chrome { border-top: 2px solid #8d809f; border-radius: 20px 20px 0 0; background: #412b62; overflow: hidden; }
        .page {
            position: relative;
            flex: 1;
            min-height: 0;
            display: flex;
            flex-direction: column;
            margin-bottom: 6px;
            border-radius: 0 0 20px 20px;
            background: #b3b3b3;
            overflow: hidden;
        }
        ::slotted(sheet-page) { flex: 1; min-height: 0; }
        .shade {
            position: absolute;
            inset: auto 0 0 0;
            height: 120px;
            background: linear-gradient(transparent, rgba(0,0,0,.1));
        }
        .status {
            position: absolute;
            left: 0;
            bottom: 0;
            padding: 0 14px 0 10px;
            border-radius: 0 8px 0 0;
            background: #412b62;
            color: #fff;
            font: 24px/40px ${UI_FONT};
        }
        .scroll {
            position: absolute;
            top: 31%;
            right: 2px;
            width: 13px;
            height: 384px;
            border-radius: 7px;
            background: #666;
        }
    </style>
    <div class="chrome"><slot name="chrome"></slot></div>
    <div class="page">
        <slot></slot>
        <div class="scroll"></div>
        <div class="shade"></div>
        <slot name="overlay"></slot>
        <div class="status"><slot name="status"></slot></div>
    </div>
`);

define("browser-tab", `
    <style>
        :host {
            display: flex;
            flex: 1 1 0;
            align-items: center;
            box-sizing: border-box;
            min-width: 0;
            height: 68px;
            padding: 0 14px 0 16px;
            color: #fff;
            font: 500 24px/32px ${UI_FONT};
        }
        .label {
            flex: 1;
            min-width: 0;
            margin: 0 2px 0 16px;
            overflow: hidden;
            white-space: nowrap;
            -webkit-mask-image: linear-gradient(90deg, #000 45%, transparent);
        }
        :host([active]) { flex-grow: 1.1; border-radius: 16px 16px 0 0; background: #66459a; }
        :host([active]) .label { -webkit-mask-image: none; margin-left: 20px; }
        .rule { width: 2px; height: 40px; margin-right: -14px; background: #7c6b93; }
        :host([active]) .rule, :host([plain]) .rule { visibility: hidden; }
    </style>
    <slot name="icon"></slot>
    <div class="label"><slot></slot></div>
    <div class="rule"></div>
`);

class TabStrip extends HTMLElement {
    constructor() {
        super();
        const tabs = [
            ["gmail", "Inbox"], ["qs", "Qlik"], ["qs", "Qlik"], ["qs", ""], ["lock", "Pas"],
            ["jira", "[El"], ["jira", "Pri"], ["jira", "[Pl"], ["sheetjs", "RO"], ["sheetjs", "PR"], ["jira", "[Pl"],
            ["qlik", "Da"], ["qlik", "Cu"], ["jira", "[Pl"], ["gcal", "Zif"], ["github", "Pri", "#24292e"], ["sheetjs", "All"],
            ["github", "Pu", "#24292e"], ["github", "ren", "#fff"], ["jira", "[Pl"], ["gtrans", "Go"], ["qlik", "Ne"], ["qlik", "Mu"],
        ];
        const html = tabs.map(([icon, label, color], i) => `
            <browser-tab ${i === 3 ? "active" : i === 2 ? "plain" : ""}>
                <ui-icon slot="icon" name="${icon}" width="32" style="color:${color || "#fff"}"></ui-icon>
                ${i === 3 ? `<button aria-label="Close tab"><ui-icon name="close" width="22"></ui-icon></button>` : label}
            </browser-tab>`).join("");
        this.attachShadow({ mode: "open" }).innerHTML = `
            <style>
                :host { display: flex; align-items: flex-end; height: 82px; padding-left: 42px; padding-right: 12px; }
                button { display: flex; align-items: center; justify-content: center; padding: 0; border: 0; background: none; color: #fff; }
                .lights { display: flex; align-self: center; gap: 16px; width: 146px; }
                .lights i { width: 24px; height: 24px; border-radius: 50%; background: #ed6a5e; }
                .lights i:nth-child(2) { background: #f4bf4f; }
                .lights i:nth-child(3) { background: #61c554; }
                .tabs { display: flex; flex: 1; min-width: 0; }
                .new { width: 90px; height: 68px; }
                .menu { width: 64px; height: 68px; margin-left: 79px; }
            </style>
            <div class="lights"><i></i><i></i><i></i></div>
            <div class="tabs">${html}</div>
            <button class="new" aria-label="New tab"><ui-icon name="plus" width="26"></ui-icon></button>
            <button class="menu" aria-label="Search tabs"><ui-icon name="tab-menu"></ui-icon></button>`;
    }
}
customElements.define("tab-strip", TabStrip);

define("address-bar", `
    <style>
        :host {
            display: flex;
            align-items: center;
            height: 72px;
            padding: 0 12px;
            border-bottom: 2px solid #8b6cb4;
            background: #66459a;
            color: #fff;
        }
        button {
            display: flex;
            align-items: center;
            justify-content: center;
            width: 64px;
            height: 64px;
            padding: 0;
            border: 0;
            background: none;
            color: inherit;
        }
        .off { color: #a78fc6; }
        label {
            flex: 1;
            display: flex;
            align-items: center;
            height: 56px;
            margin: 0 12px;
            padding: 0 4px 0 26px;
            border-radius: 28px;
            background: #513a76;
            color: #c2c2c2;
        }
        input {
            flex: 1;
            min-width: 0;
            height: 56px;
            margin-left: 20px;
            padding: 0;
            border: 0;
            outline: 0;
            background: linear-gradient(90deg, #fff 318px, #c5bbd1 318px);
            -webkit-background-clip: text;
            -webkit-text-fill-color: transparent;
            font: 28px/56px ${UI_FONT};
        }
        .avatar span { width: 44px; border-radius: 50%; background: #3e93a3; font: 22px/44px ${UI_FONT}; }
    </style>
    <button aria-label="Back"><ui-icon name="back" width="28"></ui-icon></button>
    <button class="off" aria-label="Forward"><ui-icon name="forward" width="28"></ui-icon></button>
    <button aria-label="Reload"><ui-icon name="reload" width="30"></ui-icon></button>
    <label>
        <ui-icon name="padlock" width="20"></ui-icon>
        <input aria-label="Address" value="bi2.everydayhealth.com/sense/app/6b3d20b0-53f6-4551-92d6-c05ecb86ae75/sheet/afe64c98-ab9c-4f91-9450-836c2ebf6389/state/analysis/options/deve...">
        <button aria-label="Bookmark this tab"><ui-icon name="star" width="30"></ui-icon></button>
    </label>
    <button aria-label="Colour picker"><ui-icon name="picker" width="44"></ui-icon></button>
    <button aria-label="Bug tool"><ui-icon name="bug" width="30"></ui-icon></button>
    <button aria-label="Vue devtools"><ui-icon name="vue" width="32"></ui-icon></button>
    <button aria-label="Extensions"><ui-icon name="puzzle" width="32"></ui-icon></button>
    <button class="avatar" aria-label="Profile"><span>Y</span></button>
    <button aria-label="Menu"><ui-icon name="dots" width="8"></ui-icon></button>
`);

/* sheet */

define("sheet-header", `
    <style>
        :host {
            display: grid;
            grid-template-columns: 1fr auto 1fr;
            align-items: center;
            height: 82px;
            border-bottom: 2px solid #8c8c8c;
            font-weight: 700;
        }
        .left, .right, nav, .group { display: flex; align-items: center; }
        .left { padding-left: 20px; color: #595959; }
        .left h1 { margin: 0 0 0 20px; font-size: 30px; }
        .left ui-icon[name=app-dots] { margin-left: 31px; }
        .right { justify-content: flex-end; gap: 17px; padding-right: 21px; }
        button {
            display: flex;
            align-items: center;
            justify-content: center;
            gap: 20px;
            box-sizing: border-box;
            height: 56px;
            padding: 0;
            border: 2px solid #7b7b7b;
            border-radius: 6px;
            background: none;
            color: #404040;
            font: inherit;
        }
        .menu { width: 109px; }
        .mark { width: 103px; gap: 10px; }
        .group { border: 2px solid #7b7b7b; border-radius: 6px; }
        .group button { height: 52px; border: 0; border-right: 2px solid #7b7b7b; border-radius: 0; }
        .group button:last-child { border: 0; }
        .edit { width: 187px; gap: 40px; }
        .name { width: 428px; }
        .step { width: 84px; }
        nav { align-self: start; }
        nav a {
            width: 200px;
            border-bottom: 4px solid transparent;
            color: #404040;
            line-height: 78px;
            text-align: center;
            text-decoration: none;
        }
        nav a.on { border-color: #b07028; }
    </style>
    <div class="left">
        <button class="menu" aria-label="Navigation"><ui-icon name="burger"></ui-icon><ui-icon name="caret"></ui-icon></button>
        <ui-icon name="app-dots"></ui-icon>
        <h1>Prime Outcome(3)</h1>
    </div>
    <nav><a href="#">Data</a><a class="on" href="#">Analysis</a><a href="#">Story</a></nav>
    <div class="right">
        <button class="mark" aria-label="Bookmarks"><ui-icon name="bookmark"></ui-icon><ui-icon name="caret"></ui-icon></button>
        <div class="group">
            <button class="edit"><ui-icon name="pencil"></ui-icon>Edit</button>
            <button class="name">Survey: Response Charts<ui-icon name="sheet"></ui-icon><ui-icon name="caret"></ui-icon></button>
            <button class="step" aria-label="Previous sheet"><ui-icon name="prev"></ui-icon></button>
            <button class="step" aria-label="Next sheet"><ui-icon name="next"></ui-icon></button>
        </div>
    </div>
`);

define("selection-item", `
    <style>
        :host {
            display: flex;
            flex-direction: column;
            box-sizing: border-box;
            width: 298px;
            height: 74px;
            border-right: 2px solid #969696;
            background: #b3b3b3;
        }
        .row { flex: 1; display: flex; align-items: center; justify-content: space-between; padding: 0 19px; white-space: nowrap; }
        .title { padding-left: 2px; color: #2b2b2b; font-weight: 700; line-height: 34px; }
        .value { color: #6b6b6b; font-size: 24px; line-height: 24px; }
        button { display: flex; padding: 0; border: 0; background: none; color: #595959; }
        .bar { height: 8px; background: #767676; }
        .bar div { width: var(--fill, 0); height: 100%; background: #2f6a37; }
    </style>
    <div class="row">
        <div><div class="title"><slot></slot></div><div class="value"><slot name="value"></slot></div></div>
        <button aria-label="Clear selection"><ui-icon name="clear"></ui-icon></button>
    </div>
    <div class="bar"><div></div></div>
`);

define("selection-bar", `
    <style>
        :host { display: flex; height: 74px; border-bottom: 2px solid #969696; background: #a1a1a1; color: #2b2b2b; }
        .tools {
            display: flex;
            align-items: center;
            justify-content: space-between;
            box-sizing: border-box;
            width: 354px;
            padding: 0 24px;
            border-right: 2px solid #969696;
            background: #a9a9a9;
        }
        button {
            display: flex;
            align-items: center;
            justify-content: center;
            gap: 42px;
            padding: 0;
            border: 0;
            background: none;
            color: inherit;
            font: inherit;
            font-weight: 700;
        }
        button:disabled { color: #858585; }
        .end { display: flex; margin-left: auto; }
        .end button { box-sizing: border-box; width: 279px; padding: 4px 0 0 4px; border-left: 2px solid #999; background: #a9a9a9; }
        .end button:last-child { width: 232px; gap: 20px; }
    </style>
    <div class="tools">
        <button aria-label="Search selections"><ui-icon name="sel-search"></ui-icon></button>
        <button aria-label="Step back"><ui-icon name="sel-back"></ui-icon></button>
        <button aria-label="Step forward" disabled><ui-icon name="sel-forward"></ui-icon></button>
        <button aria-label="Clear all"><ui-icon name="sel-clear"></ui-icon></button>
    </div>
    <selection-item style="--fill:50%">Restrict Data Ac...<span slot="value">0</span></selection-item>
    <selection-item style="--fill:100%">=If(Matched=1,'...<span slot="value">Yes</span></selection-item>
    <selection-item style="--fill:50%">=If([Program Ex...<span slot="value">Ended</span></selection-item>
    <selection-item style="--fill:1%">Program<span slot="value">10WB163</span></selection-item>
    <selection-item style="--fill:1%">question<span slot="value">Which of the followin...</span></selection-item>
    <div class="end">
        <button><ui-icon name="selections"></ui-icon>Selections</button>
        <button><ui-icon name="insights"></ui-icon>Insights</button>
    </div>
`);

define("filter-card", `
    <style>
        :host { display: block; border: 2px solid #979797; border-radius: 6px; overflow: hidden; }
        .title { padding: 2px 16px 0; border-bottom: 2px solid #979797; font-weight: 700; line-height: 50px; }
        .bar { height: 10px; background: linear-gradient(90deg, #2f6a37 50%, #767676 50%); }
    </style>
    <div class="title"><slot></slot></div>
    <div class="bar"></div>
`);

define("question-table", `
    <style>
        :host { display: block; }
        table { width: 100%; border-collapse: collapse; border-top: 2px solid #a8a8a8; border-left: 2px solid #a8a8a8; }
        td, th { padding: 0; border-bottom: 2px solid #9b9b9b; line-height: 40px; text-align: left; white-space: nowrap; }
        th { padding: 0 0 3px; }
        th div { display: flex; align-items: center; gap: 23px; }
        .top { padding-left: 13px; }
        .sub { padding-left: 61px; }
        td { padding-left: 105px; }
        button { display: flex; padding: 0; border: 0; background: none; color: #4d4d4d; }
    </style>
    <table>
        <tr><th><div class="top"><button aria-label="Collapse pre"><ui-icon name="minus"></ui-icon></button>pre</div></th></tr>
        <tr><th><div class="sub"><button aria-label="Collapse question"><ui-icon name="minus"></ui-icon></button>Which of the following is an example of drug abuse?</div></th></tr>
        <tr><td>Helen is a 25-year-old student who is currently working part-time to<br>pay her school tuition. She sometimes borrows a stimulant pill from her<br>ADHD-diagnosed friend to feel energized and aid her concentration.</td></tr>
        <tr><td>Susan is a 40-year-old businesswoman who tells you that a year ago,<br>she would only have a few glasses of wine with dinner, but now she<br>usually finishes the whole bottle. She admits to missing work on</td></tr>
        <tr><th><div class="top"><button aria-label="Expand post"><ui-icon name="expand"></ui-icon></button>post</div></th></tr>
    </table>
`);

define("response-chart", `
    <style>
        :host { display: flex; padding-top: 93px; overflow: hidden; }
        .name { display: flex; justify-content: center; width: 66px; padding-top: 84px; color: #262626; font-size: 31px; }
        .name span { align-self: center; writing-mode: vertical-rl; transform: rotate(180deg); }
        .axis { width: 90px; border-right: 2px solid #8c8c8c; color: #4d4d4d; }
        .tick { display: flex; justify-content: flex-end; gap: 10px; height: 202px; line-height: 0; }
        .tick i { width: 15px; height: 2px; background: #8c8c8c; }
        .plot { flex: 1; display: grid; grid-template-columns: 708fr 708fr 179fr; min-width: 0; }
        .band { display: flex; align-items: flex-end; gap: 12px; padding: 0 123px; }
        .bar { flex: 1; display: flex; flex-direction: column; height: 47%; background: #163a5b; color: #a9b8c6; font-size: 22px; line-height: 34px; text-align: center; }
        .bar + .bar { background: #4e6c8d; color: #34465c; }
        .low span { height: 42px; margin-top: -42px; color: #404040; line-height: 42px; }
        .full { height: 100%; }
    </style>
    <div class="name"><span>Responses</span></div>
    <div class="axis">
        <div class="tick"><i></i></div>
        <div class="tick"><i></i></div>
        <div class="tick">1<i></i></div>
        <div class="tick">0.5<i></i></div>
    </div>
    <div class="plot">
        <div class="band"><div class="bar low"><span>1</span></div><div class="bar low"><span>1</span></div></div>
        <div class="band"><div class="bar full"><span>2</span></div><div class="bar full"><span>2</span></div></div>
    </div>
`);

define("sheet-page", `
    <style>
        :host { display: flex; flex-direction: column; overflow: hidden; }
        .intro { display: flex; gap: 30px; margin-top: -15px; padding-left: 20px; line-height: 44px; }
        .filters { display: flex; flex-direction: column; width: 453px; }
        .above { height: 15px; margin-bottom: 46px; border-bottom: 2px solid #979797; border-radius: 6px; }
        p { margin: 0; font-size: 28px; }
        em { font-size: 30px; }
        .board {
            flex: 1;
            min-height: 0;
            display: grid;
            grid-template-columns: 928fr 1753fr;
            gap: 142px;
            padding: 0 37px 0 20px;
        }
        .left { padding-top: 164px; }
        .right { display: flex; flex-direction: column; min-height: 0; padding-top: 43px; }
        h2, h3 { margin: 0; line-height: 44px; }
        h2 { padding-left: 9px; font-size: 35px; font-weight: 400; }
        h3 { color: #5a5a5a; font-size: 34px; }
        .left h3 { margin: 60px 0 19px 21px; }
        .kpi { padding-left: 20%; }
        .kpi h3 { font-size: 33px; }
        .hatch {
            height: 36px;
            margin-top: 18px;
            background: repeating-linear-gradient(135deg, #a6a6a6 0 3px, #b3b3b3 3px 9px);
            color: #333;
            font-size: 36px;
            font-weight: 500;
            line-height: 50px;
            text-align: center;
        }
        .chart-title { margin: 127px 0 0; padding-left: 681px; }
        response-chart { flex: 1; min-height: 0; }
    </style>
    <div class="intro">
        <div class="filters"><div class="above"></div><filter-card>Program Ended Flag</filter-card></div>
        <div>
            <p>1. Please select a Program from above filter selection to display all questions in left table at the bottom</p>
            <p>2. then, select a question from table on left to display bar charts at right bottom. Bar Charts has selection of measures that can be plotted against response options.</p>
            <p><em>ps: Average rating measure works only with rating type of questions</em></p>
        </div>
    </div>
    <div class="board">
        <div class="left">
            <h2>List of all Questions in Program</h2>
            <h3>Survey type; Question and Response Option</h3>
            <question-table></question-table>
        </div>
        <div class="right">
            <div class="kpi"><h3>Multi KPI css</h3><div class="hatch">#1</div></div>
            <h3 class="chart-title">drug abuse?</h3>
            <response-chart></response-chart>
        </div>
    </div>
`);

/* dialog */

define("developer-dialog", `
    <style>
        :host { position: absolute; inset: 0; display: flex; align-items: center; justify-content: center; color: #595959; }
        section {
            box-sizing: border-box;
            width: 702px;
            border: 2px solid #808080;
            border-radius: 6px;
            background: #fff;
            box-shadow: 0 12px 60px rgba(0,0,0,.45);
            overflow: hidden;
        }
        h2 { margin: 0; padding: 0 38px; border-bottom: 2px solid #ccc; background: #fbfbfb; font-size: 30px; line-height: 87px; }
        .body { padding: 43px 38px 30px; line-height: 50px; }
        .row { display: flex; align-items: center; gap: 16px; height: 50px; }
        dl { display: grid; grid-template-columns: 300px 1fr; margin: 0; }
        dt { font-weight: 700; }
        dd { margin: 0 0 0 17px; }
        button { display: flex; align-items: center; gap: 16px; padding: 0; border: 0; background: none; color: inherit; font: inherit; font-weight: 700; }
        hr { margin: 16px 12px; border: 0; border-top: 2px solid #b3b3b3; }
        a { color: #0022e6; text-underline-offset: 4px; }
        a ui-icon { margin-left: 4px; vertical-align: -6px; }
        footer { display: flex; justify-content: flex-end; padding: 16px 14px; border-top: 2px solid #ccc; background: #fbfbfb; }
        footer button {
            justify-content: center;
            width: 136px;
            height: 56px;
            border: 3px solid #5fa0c9;
            border-radius: 6px;
            background: #fff;
            box-shadow: 0 0 5px #5fa0c9;
        }
    </style>
    <section role="dialog" aria-label="Developer">
        <h2>Developer</h2>
        <div class="body">
            <dl><dt>Object ID</dt><dd>bnujL</dd></dl>
            <div class="row"><button>Properties<ui-icon name="arrow"></ui-icon></button></div>
            <div class="row"><button>Layout<ui-icon name="arrow"></ui-icon></button></div>
            <hr>
            <div class="row"><a href="#">Open in single configurator<ui-icon name="popout"></ui-icon></a></div>
            <div class="row"><a href="#">Test exporting<ui-icon name="popout"></ui-icon></a><a href="#">Test window sized export<ui-icon name="popout"></ui-icon></a></div>
            <div class="row"><span>Test Live mashup: <a href="#">Object<ui-icon name="popout"></ui-icon></a></span><a href="#">Sheet<ui-icon name="popout"></ui-icon></a></div>
        </div>
        <footer><button>Close</button></footer>
    </section>
`);

/* dock */

class DockBar extends HTMLElement {
    constructor() {
        super();
        /* a trailing * marks a running app, | is a divider */
        const apps = "finder* launchpad chrome* safari skype* calendar teams telegram* outlook* phpstorm vscode* slack* terminal* spotify docker cloudapp appstore notes* settings* | shopware* skypebiz viber* | folder trash".split(" ");
        this.attachShadow({ mode: "open" }).innerHTML = `
            <style>
                :host { display: flex; justify-content: center; padding-bottom: 10px; }
                .dock {
                    display: flex;
                    box-sizing: border-box;
                    height: 130px;
                    padding: 10px 0 0 3px;
                    border: 2px solid #7f8e9a;
                    border-radius: 38px;
                    background: linear-gradient(90deg, #5b6878, #56708a 45%, #5f7b8a 60%, #627676);
                }
                button { display: flex; flex-direction: column; align-items: center; gap: 10px; width: 108px; padding: 0; border: 0; background: none; }
                .on::after { content: ""; width: 8px; height: 8px; border-radius: 50%; background: #05080c; }
                .rule { width: 2px; height: 94px; margin: 6px 24px 0; background: #33454f; }
            </style>
            <div class="dock">${apps.map(a => a === "|" ? `<div class="rule"></div>` : `
                <button aria-label="${a.replace("*", "")}" class="${a.endsWith("*") ? "on" : ""}"><ui-icon name="${a.replace("*", "")}"></ui-icon></button>`).join("")}
            </div>`;
    }
}
customElements.define("dock-bar", DockBar);
</script>
</body>
</html>
